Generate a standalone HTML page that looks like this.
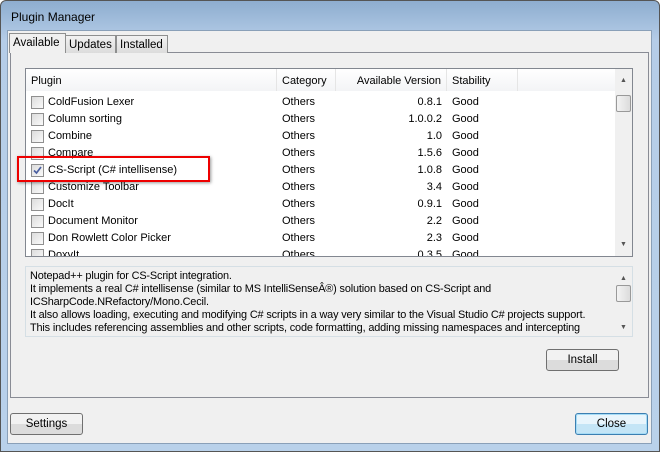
<!DOCTYPE html>
<html><head><style>
*{margin:0;padding:0;box-sizing:border-box}
body{width:663px;height:456px;overflow:hidden;background:#fff;font-family:"Liberation Sans",sans-serif;font-size:11px;color:#000;position:relative}
.win{position:absolute;left:0;top:0;width:660px;height:452px;border:1px solid #555;border-radius:6px 6px 0 0;background:linear-gradient(#8eadcf,#b5cde8 40px,#b9d1ea);}
.title{position:absolute;left:11px;top:10px;font-size:12px;}
.client{position:absolute;left:7px;top:30px;width:645px;height:414px;background:#f0f0f0;border:1px solid #8aa0b8}
.a{position:absolute}
.tab{position:absolute;height:18px;border:1px solid #8e8f8f;border-bottom:none;background:linear-gradient(#f2f2f2,#dcdcdc);padding:3px 3px 0;font-size:11.5px}
.page{position:absolute;left:10px;top:52px;width:639px;height:346px;border:1px solid #898c95;background:#f0f0f0}
.list{position:absolute;left:25px;top:68px;width:608px;height:189px;border:1px solid #828790;background:#fff;overflow:hidden}
.hdr{position:absolute;top:0;height:22px;border-right:1px solid #e5e5e5;padding:6px 5px 0;background:linear-gradient(#fff,#f3f4f6)}
.row{position:absolute;left:0;height:17px;width:590px}
.row span{position:absolute;top:2px}
.cb{position:absolute;left:5px;top:2px;width:13px;height:13px;border:1px solid #8f8f8f;background:linear-gradient(135deg,#dcdcdc,#fafafa)}
.sb{position:absolute;right:0;top:0;width:17px;height:100%;background:#f0f0f0}
.thumb{position:absolute;left:1px;width:15px;height:17px;border:1px solid #999;border-radius:2px;background:linear-gradient(90deg,#f3f3f3,#dcdcdc)}
.btn{position:absolute;height:22px;border:1px solid #707070;border-radius:3px;background:linear-gradient(#f2f2f2 50%,#dcdcdc 50%);text-align:center;padding-top:4px;font-size:11.5px}
</style></head><body>
<div class="win"></div>
<div class="title">Plugin Manager</div>
<div class="client"></div>
<div class="page"></div>
<div class="tab" style="left:65px;top:35px;width:51px">Updates</div>
<div class="tab" style="left:116px;top:35px;width:52px">Installed</div>
<div class="tab" style="left:9px;top:33px;width:57px;height:20px;background:#f0f0f0;z-index:2">Available</div>
<div class="list">
 <div class="hdr" style="left:0;width:251px">Plugin</div>
 <div class="hdr" style="left:251px;width:59px">Category</div>
 <div class="hdr" style="left:310px;width:111px;text-align:right">Available Version</div>
 <div class="hdr" style="left:421px;width:71px">Stability</div>
 <div class="hdr" style="left:492px;width:97px;border:none"></div>
 <div id="rows"></div>
 <div class="sb"><div class="a" style="left:5px;top:8px;font-size:7px;color:#555">▲</div><div class="thumb" style="top:26px"></div><div class="a" style="left:5px;top:172px;font-size:7px;color:#555">▼</div></div>
</div>
<div class="a" style="left:17px;top:156px;width:193px;height:26px;border:2px solid #e00;box-shadow:1px 1px 3px rgba(0,0,0,.4)"></div>
<div class="a" style="left:25px;top:266px;width:608px;height:71px;border:1px solid #d5dfe5;background:#f0f0f0;font-size:10.9px;letter-spacing:-0.15px;line-height:13px;padding:3px 0 0 4px;overflow:hidden;white-space:nowrap">
Notepad++ plugin for CS-Script integration.<br>It implements a real C# intellisense (similar to MS IntelliSenseÂ®) solution based on CS-Script and<br>ICSharpCode.NRefactory/Mono.Cecil.<br>It also allows loading, executing and modifying C# scripts in a way very similar to the Visual Studio C# projects support.<br>This includes referencing assemblies and other scripts, code formatting, adding missing namespaces and intercepting
 <div class="sb" style="background:#f0f0f0"><div class="a" style="left:5px;top:5px;font-size:7px;color:#555">▲</div><div class="thumb" style="top:18px"></div><div class="a" style="left:5px;top:54px;font-size:7px;color:#555">▼</div></div>
</div>
<div class="btn" style="left:546px;top:349px;width:73px">Install</div>
<div class="btn" style="left:10px;top:413px;width:73px">Settings</div>
<div class="btn" style="left:575px;top:413px;width:73px;border-color:#3c7fb1;box-shadow:inset 0 0 0 1px #a6dcf6;background:linear-gradient(#e8f5fc 50%,#c4e5f6 50%)">Close</div>
<script>
var d=[["ColdFusion Lexer","0.8.1"],["Column sorting","1.0.0.2"],["Combine","1.0"],["Compare","1.5.6"],["CS-Script (C# intellisense)","1.0.8",1],["Customize Toolbar","3.4"],["DocIt","0.9.1"],["Document Monitor","2.2"],["Don Rowlett Color Picker","2.3"],["DoxyIt","0.3.5"]];
var h="";d.forEach(function(r,i){h+='<div class="row" style="top:'+(25+i*17)+'px"><div class="cb">'+(r[2]?'<svg width="11" height="11" style="position:absolute;left:0;top:0"><path d="M2 5.5L4.5 8L9 2" stroke="#4a5fa0" stroke-width="1.7" fill="none"/></svg>':'')+'</div><span style="left:22px">'+r[0]+'</span><span style="left:256px">Others</span><span style="right:174px">'+r[1]+'</span><span style="left:426px">Good</span></div>'});
document.getElementById("rows").innerHTML=h;
</script>
</body></html>
